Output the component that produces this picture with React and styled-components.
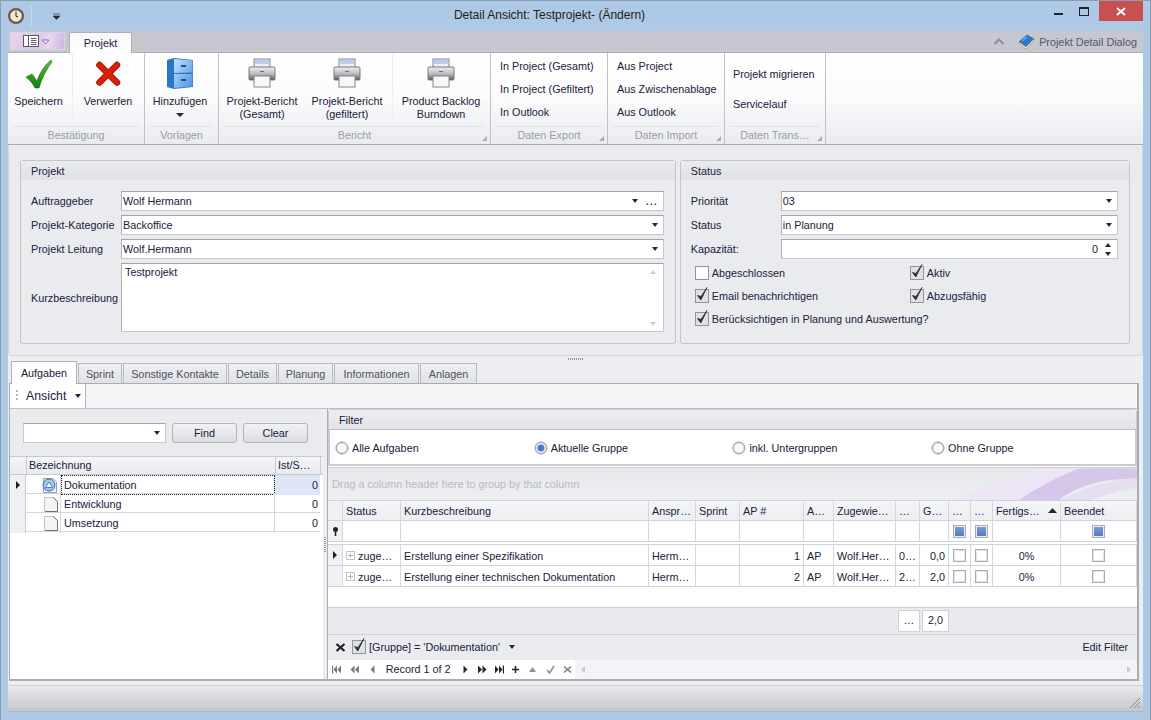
import React from 'react';
import styled, { createGlobalStyle } from 'styled-components';

const GlobalStyle = createGlobalStyle`
  html, body {
    margin: 0;
    padding: 0;
    overflow: hidden;
  }
  * {
    box-sizing: border-box;
  }
  body {
    font-family: "Liberation Sans", "Noto Sans", sans-serif;
    font-size: 10.8px;
    color: #20203c;
  }
`;

const Window = styled.div`
  width: 1151px;
  height: 720px;
  background: #aec9e6;
  border: 1px solid #8a9cb2;
  border-bottom: 0;
  display: flex;
  flex-direction: column;
`;

const TitleBar = styled.div`
  height: 30px;
  display: flex;
  align-items: flex-start;
`;

const QuickAccess = styled.div`
  width: 100px;
  height: 30px;
  display: flex;
  align-items: center;
  padding-left: 6px;
`;

const QuickDivider = styled.div`
  width: 1px;
  height: 20px;
  background: #c6daee;
  margin: 0 20px 0 6px;
`;

const Title = styled.div`
  flex: 1;
  text-align: center;
  font-size: 12px;
  line-height: 29px;
  color: #1c1c1c;
  padding-right: 45px;
`;

const WindowControls = styled.div`
  width: 100px;
  margin-right: 7px;
  display: flex;
  align-items: flex-start;
  justify-content: flex-end;
`;

const ControlButton = styled.div`
  width: 26px;
  height: 20px;
  display: flex;
  align-items: center;
  justify-content: center;
`;

const CloseButton = styled(ControlButton)`
  width: 44px;
  background: #c75050;
  margin-left: 2px;
`;

const Body = styled.div`
  flex: 1;
  margin: 0 7px;
  background: #eceef1;
  display: flex;
  flex-direction: column;
  min-height: 0;
`;

const RibbonTabs = styled.div`
  height: 21px;
  background: #c6c7cf;
  display: flex;
  align-items: flex-start;
  padding: 1px 6px 0 2px;
`;

const AppButton = styled.div`
  width: 55px;
  height: 18px;
  border: 1px solid #dcd2e6;
  background: linear-gradient(100deg, #e6d5ee 0%, #d8c3e6 45%, #e7d8ef 70%, #cdb8de 100%);
  display: flex;
  align-items: center;
  justify-content: center;
`;

const RibbonTab = styled.div`
  width: 63px;
  height: 21px;
  margin-left: 4px;
  background: linear-gradient(#f8f8fa, #ffffff);
  border: 1px solid #aeb0b8;
  border-bottom: 0;
  border-radius: 2px 2px 0 0;
  text-align: center;
  line-height: 21px;
  position: relative;
  z-index: 1;
`;

const TabsRight = styled.div`
  margin-left: auto;
  height: 20px;
  display: flex;
  align-items: center;
  color: #555866;
`;

const ChevronGap = styled.span`
  width: 13px;
`;

const DialogName = styled.span`
  margin-left: 4px;
`;

const Ribbon = styled.div`
  height: 93px;
  background: linear-gradient(#ffffff 0%, #fbfbfc 50%, #e9ebef 100%);
  border-top: 1px solid #aeb0b8;
  border-bottom: 1px solid #a7a9b2;
  display: flex;
`;

const RibbonGroup = styled.div`
  width: ${(p) => p.$width}px;
  border-right: 1px solid #c0c2ca;
  display: flex;
  flex-direction: column;
  position: relative;
`;

const GroupContent = styled.div`
  height: 73px;
  display: flex;
`;

const GroupCaption = styled.div`
  flex: 1;
  margin: 0 5px;
  border-top: 1px solid #e1e3e7;
  text-align: center;
  color: #9b9da6;
  line-height: 17px;
  white-space: nowrap;
`;

const CornerArrow = styled.div`
  position: absolute;
  right: 3px;
  bottom: 3px;
  width: 0;
  height: 0;
  border-left: 5px solid transparent;
  border-bottom: 5px solid #a9abb2;
`;

const LargeButton = styled.div`
  width: ${(p) => p.$width}px;
  display: flex;
  flex-direction: column;
  align-items: center;
  text-align: center;
  line-height: 13px;
  padding: 4px ${(p) => p.$inset || 0}px 0 0;
  border-right: ${(p) => (p.$divider ? '1px solid #eceef1' : '0')};
`;

const IconSlot = styled.div`
  height: 38px;
`;

const DownCaret = styled.div`
  width: 0;
  height: 0;
  margin-top: 5px;
  border-left: 4px solid transparent;
  border-right: 4px solid transparent;
  border-top: 4px solid #26262e;
`;

const SmallButtons = styled.div`
  display: flex;
  flex-direction: column;
  gap: ${(p) => p.$gap}px;
  padding: ${(p) => p.$top}px 0 0 ${(p) => p.$left}px;
  line-height: 13px;
  white-space: nowrap;
`;

const TopPanel = styled.div`
  height: 211px;
  background: #e9ebef;
  border: 1px solid #d3d5da;
  border-top: 0;
  border-radius: 0 0 4px 4px;
  padding: 15px 12px 0 11px;
  display: flex;
  gap: 4px;
`;

const GroupBox = styled.div`
  width: ${(p) => p.$width}px;
  height: 184px;
  border: 1px solid #c3c5cb;
  border-radius: 3px;
`;

const GroupHeader = styled.div`
  height: 19px;
  padding-left: 10px;
  line-height: 20px;
  background: linear-gradient(#e9ebee, #dfe1e5);
`;

const GroupBody = styled.div`
  display: flex;
  flex-direction: column;
  gap: 4px;
  padding: 11px 11px 0 10px;
`;

const FormRow = styled.div`
  display: flex;
  align-items: center;
`;

const FormLabel = styled.div`
  width: 90px;
  flex: none;
  white-space: nowrap;
`;

const Field = styled.div`
  flex: 1;
  height: 20px;
  background: #fff;
  border: 1px solid #c6c8ce;
  border-top-color: #a2a4ab;
  border-left-color: #b2b4ba;
  display: flex;
  align-items: center;
  padding: 0 5px 0 1px;
  line-height: 16px;
  white-space: nowrap;
`;

const FieldValue = styled.span`
  flex: 1;
  text-align: ${(p) => p.$align || 'left'};
`;

const ComboArrow = styled.span`
  width: 0;
  height: 0;
  flex: none;
  border-left: 3.5px solid transparent;
  border-right: 3.5px solid transparent;
  border-top: 4px solid #26262e;
`;

const Ellipsis = styled.span`
  flex: none;
  width: 20px;
  text-align: right;
  font-size: 13px;
  line-height: 12px;
`;

const Spinner = styled.span`
  display: flex;
  flex-direction: column;
  gap: 5px;
  margin-left: 7px;
  margin-right: 1px;
`;

const SpinUp = styled.span`
  width: 0;
  height: 0;
  border-left: 3.5px solid transparent;
  border-right: 3.5px solid transparent;
  border-bottom: 4px solid #26262e;
`;

const MemoField = styled.div`
  flex: 1;
  height: 69px;
  background: #fff;
  border: 1px solid #c6c8ce;
  border-top-color: #a2a4ab;
  border-left-color: #b2b4ba;
  padding: 2px 4px 1px 3px;
  display: flex;
  justify-content: space-between;
`;

const MemoScroll = styled.div`
  display: flex;
  flex-direction: column;
  justify-content: space-between;
  padding: 4px 0 4px;
  width: 7px;
  margin-right: 2px;
`;

const MemoArrowUp = styled.span`
  width: 0;
  height: 0;
  border-left: 3.5px solid transparent;
  border-right: 3.5px solid transparent;
  border-bottom: 4px solid #cdced3;
`;

const MemoArrowDown = styled.span`
  width: 0;
  height: 0;
  border-left: 3.5px solid transparent;
  border-right: 3.5px solid transparent;
  border-top: 4px solid #cdced3;
`;

const CheckGrid = styled.div`
  display: grid;
  grid-template-columns: 215px 1fr;
  grid-auto-rows: 23px;
  padding-left: 3px;
  margin-top: -2px;
`;

const CheckItem = styled.div`
  display: flex;
  align-items: center;
  gap: 2px;
  grid-column: ${(p) => (p.$wide ? '1 / 3' : 'auto')};
  white-space: nowrap;
`;

const CheckGlyph = styled.svg`
  flex: none;
  margin-top: -3px;
`;

const SplitterH = styled.div`
  height: 5px;
  display: flex;
  align-items: center;
  justify-content: center;
`;

const DotsH = styled.div`
  width: 15px;
  height: 2px;
  background: repeating-linear-gradient(90deg, #8e98a6 0 1px, transparent 1px 2px);
`;

const TabStrip = styled.div`
  height: 22px;
  margin-left: 1px;
  display: flex;
  align-items: flex-end;
  padding-left: 2px;
  gap: 1px;
`;

const Tab = styled.div`
  width: ${(p) => p.$width}px;
  height: ${(p) => (p.$active ? 23 : 20)}px;
  margin-bottom: ${(p) => (p.$active ? -1 : 0)}px;
  background: ${(p) => (p.$active ? '#ffffff' : 'linear-gradient(#eff0f3, #e0e2e6)')};
  border: 1px solid ${(p) => (p.$active ? '#b0b2ba' : '#b8bac1')};
  border-bottom: 0;
  text-align: center;
  line-height: ${(p) => (p.$active ? 22 : 20)}px;
  color: ${(p) => (p.$active ? '#20203c' : '#4f5160')};
  position: relative;
  z-index: ${(p) => (p.$active ? 1 : 0)};
`;

const TabPanel = styled.div`
  height: 298px;
  margin: 0 4px 0 1px;
  border: 1px solid #a9abb3;
  border-right-width: 2px;
  border-bottom-width: 2px;
  background: #fff;
  display: flex;
  flex-direction: column;
`;

const Toolbar = styled.div`
  height: 25px;
  background: #f4f5f6;
  border-bottom: 1px solid #bfc1c7;
  display: flex;
`;

const ToolbarSegment = styled.div`
  width: 76px;
  height: 24px;
  background: #fff;
  border-right: 1px solid #b4b6bc;
  display: flex;
  align-items: center;
  padding-left: 6px;
  font-size: 12.3px;
`;

const Grip = styled.div`
  width: 2px;
  height: 12px;
  margin-right: 8px;
  background: repeating-linear-gradient(#b6b8be 0 2px, transparent 2px 4px);
`;

const ToolbarLabel = styled.span`
  margin-right: 9px;
`;

const Panes = styled.div`
  flex: 1;
  display: flex;
  min-height: 0;
`;

const LeftPane = styled.div`
  width: 313px;
  display: flex;
  flex-direction: column;
`;

const SearchBar = styled.div`
  height: 47px;
  background: #e9ebef;
  padding: 14px 0 0 13px;
  display: flex;
  align-items: flex-start;
`;

const SearchCombo = styled.div`
  width: 143px;
  height: 20px;
  background: #fff;
  border: 1px solid #c6c8ce;
  border-top-color: #a2a4ab;
  display: flex;
  align-items: center;
  justify-content: flex-end;
  padding-right: 5px;
`;

const Button = styled.div`
  width: 65px;
  height: 20px;
  margin-left: 6px;
  background: linear-gradient(#f1f2f4, #dbdde2);
  border: 1px solid #b2b4bb;
  border-radius: 3px;
  text-align: center;
  line-height: 18px;
`;

const TreeHead = styled.div`
  display: grid;
  grid-template-columns: 16px 249px 45px 1fr;
  height: 19px;
  background: linear-gradient(#f4f5f7, #e9ebee);
  border-top: 1px solid #c8cad0;
  border-bottom: 1px solid #c8cad0;
`;

const TreeHeadCell = styled.div`
  border-left: 1px solid #c8cad0;
  padding-left: 2px;
  line-height: 17px;
  white-space: nowrap;
  overflow: hidden;
`;

const TreeRow = styled.div`
  display: grid;
  grid-template-columns: 16px 35px 214px 45px;
  height: 19px;
  border-bottom: 1px solid #d5d7dc;
  width: 310px;
`;

const RowIndicator = styled.div`
  background: #eff0f3;
  border-right: 1px solid #c8cad0;
  display: flex;
  align-items: center;
  justify-content: center;
`;

const TreeIndent = styled.div`
  border-right: 1px solid #d5d7dc;
  display: flex;
  align-items: center;
  justify-content: flex-end;
  padding-right: 1px;
`;

const TreeName = styled.div`
  padding-left: 3px;
  line-height: 20px;
  border-right: 1px solid #d5d7dc;
  outline: ${(p) => (p.$focused ? '1px dotted #222' : '0')};
  outline-offset: -1px;
`;

const TreeValue = styled.div`
  text-align: right;
  padding-right: 2px;
  line-height: 20px;
  background: ${(p) => (p.$selected ? '#dfe7f7' : 'transparent')};
`;

const IndicatorArrow = styled.span`
  width: 0;
  height: 0;
  border-top: 4px solid transparent;
  border-bottom: 4px solid transparent;
  border-left: 4px solid #1e1e26;
`;

const SplitterV = styled.div`
  width: 4px;
  background: #eceef1;
  display: flex;
  align-items: center;
  justify-content: center;
`;

const DotsV = styled.div`
  width: 2px;
  height: 15px;
  background: repeating-linear-gradient(#8e98a6 0 1px, transparent 1px 2px);
`;

const RightPane = styled.div`
  width: 810px;
  border-left: 1px solid #a9abb3;
  display: flex;
  flex-direction: column;
`;

const FilterBox = styled.div`
  height: 57px;
  border: 1px solid #c9cbd1;
  border-top-left-radius: 3px;
  border-top-right-radius: 3px;
  background: #e9ebef;
`;

const FilterHeader = styled.div`
  height: 20px;
  padding-left: 10px;
  line-height: 20px;
  background: linear-gradient(#eceef0, #e1e3e6);
  border-bottom: 1px solid #bcbec4;
`;

const RadioRow = styled.div`
  height: 35px;
  background: #fff;
  display: grid;
  grid-template-columns: repeat(4, 198.7px);
  padding: 1px 0 0 5px;
  align-items: center;
  border-left: 1px solid #c9cbd1;
  border-right: 1px solid #c9cbd1;
  border-bottom: 1px solid #c9cbd1;
`;

const RadioItem = styled.div`
  display: flex;
  align-items: center;
  gap: 3px;
`;

const GroupPanel = styled.div`
  height: 33px;
  margin-top: 1px;
  background: linear-gradient(#e6e7ea, #eeeff2);
  border-top: 1px solid #c9cbd1;
  display: flex;
  align-items: center;
  justify-content: space-between;
  padding-left: 4px;
  color: #b9bbc2;
`;

const DataRow = styled.div`
  display: grid;
  grid-template-columns: 15px 58px 248px 47px 44px 64px 30px 62px 24px 29px 22px 22px 68px 76px;
  height: ${(p) => p.$height}px;
  border-bottom: 1px solid #d0d2d8;
  background: ${(p) => p.$background || '#fff'};
  margin-top: ${(p) => p.$top || 0}px;
  border-top: ${(p) => (p.$ruled ? '1px solid #d0d2d8' : '0')};
`;

const Cell = styled.div`
  border-right: 1px solid #d5d7dc;
  padding: 0 3px;
  display: flex;
  align-items: center;
  justify-content: ${(p) => p.$justify || 'flex-start'};
  white-space: nowrap;
  overflow: hidden;
  gap: 3px;
`;

const TextCell = styled(Cell)`
  padding-top: 1px;
`;

const IndicatorCell = styled(Cell)`
  background: #f0f1f4;
  padding: 0;
  justify-content: center;
`;

const GridBlank = styled.div`
  flex: 1;
  background: #fff;
`;

const Expander = styled.span`
  width: 9px;
  height: 9px;
  flex: none;
  border: 1px solid #c0c2c8;
  background:
    linear-gradient(#b0b2b8, #b0b2b8) center / 5px 1px no-repeat,
    linear-gradient(#b0b2b8, #b0b2b8) center / 1px 5px no-repeat;
`;

const GridCheck = styled.span`
  width: 13px;
  height: 13px;
  flex: none;
  border: 1px solid #a9abb2;
  background: ${(p) => (p.$mixed ? 'linear-gradient(#7d9fdc, #4f74c0)' : '#fff')};
  box-shadow: inset 0 0 0 1px ${(p) => (p.$mixed ? '#e9ecf4' : '#e6e7ea')};
`;

const FooterBar = styled.div`
  height: 28px;
  background: #e8eaee;
  border-top: 1px solid #cdcfd5;
  border-bottom: 1px solid #cdcfd5;
  display: flex;
  justify-content: flex-end;
  align-items: center;
  gap: 2px;
  padding-right: 188px;
`;

const FooterCell = styled.div`
  width: ${(p) => p.$width}px;
  height: 22px;
  background: #fff;
  border: 1px solid #d0d2d8;
  text-align: center;
  line-height: 19px;
`;

const FilterBar = styled.div`
  height: 25px;
  background: #e9ebef;
  display: flex;
  align-items: center;
  padding: 0 9px 0 7px;
`;

const ClearGlyph = styled.svg`
  margin-right: 5px;
  flex: none;
`;

const FilterText = styled.span`
  margin: 0 9px 0 2px;
`;

const EditFilter = styled.span`
  margin-left: auto;
`;

const Navigator = styled.div`
  flex: 1;
  display: flex;
  background: #f4f4f6;
`;

const NavLeft = styled.div`
  width: 247px;
  background: #fff;
  display: flex;
  align-items: center;
`;

const NavButton = styled.span`
  width: ${(p) => p.$width || 18}px;
  display: flex;
  justify-content: center;
`;

const RecordLabel = styled.span`
  width: 76px;
  padding-left: 4px;
  white-space: nowrap;
`;

const NavScroll = styled.div`
  flex: 1;
  display: flex;
  align-items: center;
  justify-content: space-between;
  padding: 0 3px;
`;

const StatusGap = styled.div`
  height: 4px;
  background: #eceef1;
`;

const StatusBar = styled.div`
  height: 27px;
  background: linear-gradient(#e9eaec, #c6c7cc);
  border-top: 1px solid #cfd1d6;
  border-bottom: 1px solid #b4b5ba;
  display: flex;
  justify-content: flex-end;
  align-items: flex-end;
  padding: 0 2px 2px 0;
`;

const BottomEdge = styled.div`
  flex: 1;
  background: #aec9e6;
`;

const ClockIcon = () => (
  <svg width="18" height="18" viewBox="0 0 18 18">
    <circle cx="9" cy="9" r="8" fill="#6d5a44" />
    <circle cx="9" cy="9" r="5.8" fill="#f1e8cf" />
    <path d="M9 4.5V9.3L11 10" stroke="#1b1b1b" strokeWidth="1" fill="none" />
  </svg>
);

const CheckIcon = () => (
  <svg width="30" height="33" viewBox="0 0 30 33">
    <defs>
      <linearGradient id="chk" x1="0" y1="0" x2="0" y2="1">
        <stop offset="0" stopColor="#5cbf3c" />
        <stop offset="1" stopColor="#0f7f12" />
      </linearGradient>
    </defs>
    <path d="M2 20 L8 17 L13 24 C16 15 21 8 27 3 L28 5 C22 13 18 21 15 31 L11 31 C9 27 6 23 2 20 Z" fill="url(#chk)" stroke="#1c6b1c" strokeWidth=".6" />
  </svg>
);

const CrossIcon = () => (
  <svg width="30" height="33" viewBox="0 0 30 33">
    <path d="M6.5 8 L24 25.5 M24 8 L6.5 25.5" stroke="#8a1204" strokeWidth="6.5" strokeLinecap="round" />
    <path d="M6.5 8 L24 25.5 M24 8 L6.5 25.5" stroke="#dd1f08" strokeWidth="5" strokeLinecap="round" />
  </svg>
);

const CabinetIcon = () => (
  <svg width="30" height="33" viewBox="0 0 30 33">
    <defs>
      <linearGradient id="cab" x1="0" y1="0" x2="1" y2="1">
        <stop offset="0" stopColor="#c4e3fb" />
        <stop offset="1" stopColor="#4a93dd" />
      </linearGradient>
    </defs>
    <path d="M2 3 L9 1 L28 3 V30 L9 32 L2 30 Z" fill="#2a76c8" />
    <path d="M9 2 L27.5 3.5 V15.5 L9 16 Z M9 17 L27.5 17 V29.5 L9 31 Z" fill="url(#cab)" />
    <rect x="16" y="8" width="5" height="2" fill="#1c4f94" />
    <rect x="16" y="22" width="5" height="2" fill="#1c4f94" />
  </svg>
);

const PrinterIcon = () => (
  <svg width="30" height="33" viewBox="0 0 30 33">
    <defs>
      <linearGradient id="prn" x1="0" y1="0" x2="0" y2="1">
        <stop offset="0" stopColor="#f1f1f2" />
        <stop offset=".55" stopColor="#b6b8bb" />
        <stop offset="1" stopColor="#55585c" />
      </linearGradient>
    </defs>
    <rect x="7" y="2" width="16" height="12" fill="#eceef1" stroke="#85888c" />
    <rect x="8" y="3" width="14" height="4" fill="#b9cdf0" />
    <rect x="2" y="10" width="26" height="13" rx="1" fill="url(#prn)" stroke="#76797d" />
    <rect x="13" y="14" width="4" height="1" fill="#6a6c70" />
    <rect x="7" y="19" width="16" height="11" fill="#f7f7f8" stroke="#85888c" />
  </svg>
);

const BookIcon = () => (
  <svg width="17" height="16" viewBox="0 0 17 16">
    <path d="M1 8 L9 1 L16 5 L8 13 Z" fill="#2a7bd0" stroke="#1a5aa5" strokeWidth=".6" />
    <path d="M1 8 V10 L8 15 L16 7 V5 L8 13 Z" fill="#f2e9c8" stroke="#8a7f55" strokeWidth=".5" />
    <path d="M4 7 L9 3" stroke="#9bcaf2" strokeWidth="1" />
  </svg>
);

const PanelIcon = () => (
  <svg width="32" height="14" viewBox="0 0 32 14">
    <rect x="1.5" y="1.5" width="15" height="11" fill="#fff" stroke="#5a5a66" />
    <path d="M6.5 1.5V12.5" stroke="#5a5a66" />
    <path d="M9 4.5H14.5M9 6.5H14.5M9 8.5H14.5M9 10.5H14.5" stroke="#5a5a66" />
    <path d="M20 6 H27 L23.5 10 Z" fill="#f3ecf8" stroke="#8a6fa8" />
  </svg>
);

const ChevronUpIcon = () => (
  <svg width="12" height="10" viewBox="0 0 12 10">
    <path d="M1.5 7 L6 2.5 L10.5 7" fill="none" stroke="#8c8e96" strokeWidth="2" />
  </svg>
);

const QuickCaret = () => (
  <svg width="9" height="7" viewBox="0 0 9 7">
    <path d="M1 1H8M1 3H8L4.5 6.5Z" fill="#2a2a33" stroke="#2a2a33" strokeWidth=".6" />
  </svg>
);

const Check = ({ checked }) => (
  <CheckGlyph width="16" height="17" viewBox="0 0 16 17">
    <rect x="1.5" y="3.5" width="13" height="13" fill={checked ? '#dfe1e5' : '#f4f5f7'} stroke="#93959c" />
    {!checked && <rect x="2.5" y="4.5" width="11" height="11" fill="#ffffff" />}
    {checked && <path d="M3.5 9.5 L6.8 14 L13 1.5 L7 10.5 Z" fill="#2c2c34" stroke="#2c2c34" strokeWidth=".8" strokeLinejoin="round" />}
  </CheckGlyph>
);

const Radio = ({ on }) => (
  <svg width="14" height="14" viewBox="0 0 14 14">
    <circle cx="7" cy="7" r="6" fill="#d6d7db" stroke="#9b9da4" />
    <circle cx="7" cy="7" r="4" fill={on ? '#4f78c8' : '#f9f9fa'} stroke="#ffffff" strokeWidth=".8" />
  </svg>
);

const DocIcon = () => (
  <svg width="16" height="17" viewBox="0 0 16 17">
    <path d="M1.5 1.5 H10 L14.5 5.5 V15.5 H1.5 Z" fill="#f4f4f5" stroke="#c0c1c5" />
    <path d="M2 15.5 H14.5 V5.5 L10.5 1.5" fill="none" stroke="#6f7075" />
  </svg>
);

const FolderDocIcon = () => (
  <svg width="18" height="17" viewBox="0 0 18 17">
    <path d="M2.5 1.5 H12 L15.5 5 V15.5 H2.5 Z" fill="#f4f4f5" stroke="#9a9ba0" />
    <circle cx="8" cy="8" r="6" fill="#9cc6ee" stroke="#2f6fb4" />
    <path d="M4.5 10.5 L8 5 L11.5 10.5 Z" fill="#fff" stroke="#2f6fb4" strokeWidth=".8" />
  </svg>
);

const KeyIcon = () => (
  <svg width="7" height="9" viewBox="0 0 7 9">
    <circle cx="3.5" cy="2.5" r="2.5" fill="#24242c" />
    <rect x="2.7" y="4" width="1.6" height="5" fill="#24242c" />
  </svg>
);

const SortUp = () => (
  <svg width="9" height="5" viewBox="0 0 9 5">
    <path d="M4.5 0 L9 5 H0 Z" fill="#26262e" />
  </svg>
);

const NavIcon = ({ d, color = '#777a82', stroke }) => (
  <svg width="11" height="9" viewBox="0 0 11 9">
    <path d={d} fill={stroke ? 'none' : color} stroke={stroke ? color : 'none'} strokeWidth={stroke ? 1.6 : 0} />
  </svg>
);

const ClearIcon = () => (
  <ClearGlyph width="11" height="9" viewBox="0 0 11 9">
    <path d="M1.5 1 L9.5 8 M9.5 1 L1.5 8" stroke="#1f1f27" strokeWidth="2.2" />
  </ClearGlyph>
);

const GripIcon = () => (
  <svg width="12" height="12" viewBox="0 0 12 12">
    <path d="M1 11 L11 1 M5 11 L11 5 M9 11 L11 9" stroke="#85878d" strokeWidth="1" />
  </svg>
);

const Swoosh = () => (
  <svg width="184" height="33" viewBox="0 0 184 33">
    <path d="M0 33 C30 20 60 8 97 0 H130 C105 8 85 20 64 33 Z" fill="#ece5f3" />
    <path d="M64 33 C85 20 105 8 125 1 C140 0 165 0 184 1 V12 C150 8 120 20 105 33 Z" fill="#d6c7ea" />
    <path d="M105 33 C125 22 155 12 184 10 V20 C165 22 150 28 135 33 Z" fill="#e6dff0" />
  </svg>
);

const largeIconFor = { check: CheckIcon, cross: CrossIcon, cabinet: CabinetIcon, printer: PrinterIcon };

const RibbonButton = ({ icon, width, lines, caret, divider, inset }) => {
  const Icon = largeIconFor[icon];
  return (
    <LargeButton $width={width} $divider={divider} $inset={inset}>
      <IconSlot><Icon /></IconSlot>
      {lines.map((l) => <div key={l}>{l}</div>)}
      {caret && <DownCaret />}
    </LargeButton>
  );
};

const tabs = [
  ['Aufgaben', 66, true],
  ['Sprint', 44],
  ['Sonstige Kontakte', 104],
  ['Details', 49],
  ['Planung', 55],
  ['Informationen', 85],
  ['Anlagen', 57],
];

const treeRows = [
  { name: 'Dokumentation', active: true },
  { name: 'Entwicklung' },
  { name: 'Umsetzung' },
];

const gridHead = ['Status', 'Kurzbeschreibung', 'Anspr…', 'Sprint', 'AP #', 'A…', 'Zugewie…', '…', 'G…', '…', '…'];

const gridRows = [
  { text: 'Erstellung einer Spezifikation', ap: '1', hours: '0…', total: '0,0', current: true },
  { text: 'Erstellung einer technischen Dokumentation', ap: '2', hours: '2…', total: '2,0' },
];

const navIcons = {
  first: 'M1 0.5V8.5H2.2V0.5Z M6 0.5V8.5L2.5 4.5Z M10 0.5V8.5L6.5 4.5Z',
  prevPage: 'M5.5 0.5V8.5L1.5 4.5Z M10 0.5V8.5L6 4.5Z',
  prev: 'M7.5 0.5V8.5L3.5 4.5Z',
  next: 'M3.5 0.5V8.5L7.5 4.5Z',
  nextPage: 'M1 0.5V8.5L5 4.5Z M5.5 0.5V8.5L9.5 4.5Z',
  last: 'M1 0.5V8.5L4.5 4.5Z M5 0.5V8.5L8.5 4.5Z M8.8 0.5V8.5H10V0.5Z',
};

export default function App() {
  return (
    <>
      <GlobalStyle />
      <Window>
        <TitleBar>
          <QuickAccess>
            <ClockIcon />
            <QuickDivider />
            <QuickCaret />
          </QuickAccess>
          <Title>Detail Ansicht: Testprojekt- (Ändern)</Title>
          <WindowControls>
            <ControlButton>
              <svg width="9" height="9" viewBox="0 0 9 9"><rect x="0" y="6" width="9" height="2" fill="#222" /></svg>
            </ControlButton>
            <ControlButton>
              <svg width="10" height="10" viewBox="0 0 10 10"><rect x=".5" y="1.5" width="9" height="8" fill="none" stroke="#222" /><rect x="0" y="1" width="10" height="2" fill="#222" /></svg>
            </ControlButton>
            <CloseButton>
              <svg width="10" height="9" viewBox="0 0 10 9"><path d="M1 1L9 8M9 1L1 8" stroke="#fff" strokeWidth="2" /></svg>
            </CloseButton>
          </WindowControls>
        </TitleBar>
        <Body>
          <RibbonTabs>
            <AppButton><PanelIcon /></AppButton>
            <RibbonTab>Projekt</RibbonTab>
            <TabsRight>
              <ChevronUpIcon />
              <ChevronGap />
              <BookIcon />
              <DialogName>Projekt Detail Dialog</DialogName>
            </TabsRight>
          </RibbonTabs>
          <Ribbon>
            <RibbonGroup $width={137}>
              <GroupContent>
                <RibbonButton icon="check" width={65} inset={3} lines={['Speichern']} divider />
                <RibbonButton icon="cross" width={70} lines={['Verwerfen']} />
              </GroupContent>
              <GroupCaption>Bestätigung</GroupCaption>
            </RibbonGroup>
            <RibbonGroup $width={74}>
              <GroupContent>
                <RibbonButton icon="cabinet" width={70} lines={['Hinzufügen']} caret />
              </GroupContent>
              <GroupCaption>Vorlagen</GroupCaption>
            </RibbonGroup>
            <RibbonGroup $width={272}>
              <GroupContent>
                <RibbonButton icon="printer" width={86} lines={['Projekt-Bericht', '(Gesamt)']} />
                <RibbonButton icon="printer" width={88} inset={3} lines={['Projekt-Bericht', '(gefiltert)']} divider />
                <RibbonButton icon="printer" width={96} lines={['Product Backlog', 'Burndown']} />
              </GroupContent>
              <GroupCaption>Bericht</GroupCaption>
              <CornerArrow />
            </RibbonGroup>
            <RibbonGroup $width={117}>
              <GroupContent>
                <SmallButtons $top={7} $gap={10} $left={9}>
                  <div>In Project (Gesamt)</div>
                  <div>In Project (Gefiltert)</div>
                  <div>In Outlook</div>
                </SmallButtons>
              </GroupContent>
              <GroupCaption>Daten Export</GroupCaption>
              <CornerArrow />
            </RibbonGroup>
            <RibbonGroup $width={117}>
              <GroupContent>
                <SmallButtons $top={7} $gap={10} $left={9}>
                  <div>Aus Project</div>
                  <div>Aus Zwischenablage</div>
                  <div>Aus Outlook</div>
                </SmallButtons>
              </GroupContent>
              <GroupCaption>Daten Import</GroupCaption>
              <CornerArrow />
            </RibbonGroup>
            <RibbonGroup $width={101}>
              <GroupContent>
                <SmallButtons $top={15} $gap={17} $left={8}>
                  <div>Projekt migrieren</div>
                  <div>Servicelauf</div>
                </SmallButtons>
              </GroupContent>
              <GroupCaption>Daten Trans…</GroupCaption>
              <CornerArrow />
            </RibbonGroup>
          </Ribbon>
          <TopPanel>
            <GroupBox $width={657}>
              <GroupHeader>Projekt</GroupHeader>
              <GroupBody>
                <FormRow>
                  <FormLabel>Auftraggeber</FormLabel>
                  <Field>
                    <FieldValue>Wolf Hermann</FieldValue>
                    <ComboArrow />
                    <Ellipsis>…</Ellipsis>
                  </Field>
                </FormRow>
                <FormRow>
                  <FormLabel>Projekt-Kategorie</FormLabel>
                  <Field>
                    <FieldValue>Backoffice</FieldValue>
                    <ComboArrow />
                  </Field>
                </FormRow>
                <FormRow>
                  <FormLabel>Projekt Leitung</FormLabel>
                  <Field>
                    <FieldValue>Wolf.Hermann</FieldValue>
                    <ComboArrow />
                  </Field>
                </FormRow>
                <FormRow>
                  <FormLabel>Kurzbeschreibung</FormLabel>
                  <MemoField>
                    <div>Testprojekt</div>
                    <MemoScroll>
                      <MemoArrowUp />
                      <MemoArrowDown />
                    </MemoScroll>
                  </MemoField>
                </FormRow>
              </GroupBody>
            </GroupBox>
            <GroupBox $width={451}>
              <GroupHeader>Status</GroupHeader>
              <GroupBody>
                <FormRow>
                  <FormLabel>Priorität</FormLabel>
                  <Field>
                    <FieldValue>03</FieldValue>
                    <ComboArrow />
                  </Field>
                </FormRow>
                <FormRow>
                  <FormLabel>Status</FormLabel>
                  <Field>
                    <FieldValue>in Planung</FieldValue>
                    <ComboArrow />
                  </Field>
                </FormRow>
                <FormRow>
                  <FormLabel>Kapazität:</FormLabel>
                  <Field>
                    <FieldValue $align="right">0</FieldValue>
                    <Spinner>
                      <SpinUp />
                      <ComboArrow />
                    </Spinner>
                  </Field>
                </FormRow>
                <CheckGrid>
                  <CheckItem><Check />Abgeschlossen</CheckItem>
                  <CheckItem><Check checked />Aktiv</CheckItem>
                  <CheckItem><Check checked />Email benachrichtigen</CheckItem>
                  <CheckItem><Check checked />Abzugsfähig</CheckItem>
                  <CheckItem $wide><Check checked />Berücksichtigen in Planung und Auswertung?</CheckItem>
                </CheckGrid>
              </GroupBody>
            </GroupBox>
          </TopPanel>
          <SplitterH><DotsH /></SplitterH>
          <TabStrip>
            {tabs.map(([label, width, active]) => (
              <Tab key={label} $width={width} $active={active}>{label}</Tab>
            ))}
          </TabStrip>
          <TabPanel>
            <Toolbar>
              <ToolbarSegment>
                <Grip />
                <ToolbarLabel>Ansicht</ToolbarLabel>
                <ComboArrow />
              </ToolbarSegment>
            </Toolbar>
            <Panes>
              <LeftPane>
                <SearchBar>
                  <SearchCombo><ComboArrow /></SearchCombo>
                  <Button>Find</Button>
                  <Button>Clear</Button>
                </SearchBar>
                <TreeHead>
                  <div />
                  <TreeHeadCell>Bezeichnung</TreeHeadCell>
                  <TreeHeadCell>Ist/S…</TreeHeadCell>
                  <TreeHeadCell />
                </TreeHead>
                {treeRows.map((r) => (
                  <TreeRow key={r.name}>
                    <RowIndicator>{r.active && <IndicatorArrow />}</RowIndicator>
                    <TreeIndent>{r.active ? <FolderDocIcon /> : <DocIcon />}</TreeIndent>
                    <TreeName $focused={r.active}>{r.name}</TreeName>
                    <TreeValue $selected={r.active}>0</TreeValue>
                  </TreeRow>
                ))}
              </LeftPane>
              <SplitterV><DotsV /></SplitterV>
              <RightPane>
                <FilterBox>
                  <FilterHeader>Filter</FilterHeader>
                  <RadioRow>
                    <RadioItem><Radio />Alle Aufgaben</RadioItem>
                    <RadioItem><Radio on />Aktuelle Gruppe</RadioItem>
                    <RadioItem><Radio />inkl. Untergruppen</RadioItem>
                    <RadioItem><Radio />Ohne Gruppe</RadioItem>
                  </RadioRow>
                </FilterBox>
                <GroupPanel>
                  Drag a column header here to group by that column
                  <Swoosh />
                </GroupPanel>
                <DataRow $height={21} $background="linear-gradient(#f4f5f7, #eceef1)" $ruled>
                  <IndicatorCell />
                  {gridHead.map((h, i) => <Cell key={i}>{h}</Cell>)}
                  <Cell $justify="space-between">Fertigs…<SortUp /></Cell>
                  <Cell>Beendet</Cell>
                </DataRow>
                <DataRow $height={21}>
                  <IndicatorCell><KeyIcon /></IndicatorCell>
                  {Array.from({ length: 9 }).map((_, i) => <Cell key={i} />)}
                  <Cell $justify="center"><GridCheck $mixed /></Cell>
                  <Cell $justify="center"><GridCheck $mixed /></Cell>
                  <Cell />
                  <Cell $justify="center"><GridCheck $mixed /></Cell>
                </DataRow>
                {gridRows.map((r, i) => (
                  <DataRow key={r.ap} $height={i === 0 ? 22 : 21} $top={i === 0 ? 2 : 0} $ruled={i === 0}>
                    <IndicatorCell>{r.current && <IndicatorArrow />}</IndicatorCell>
                    <TextCell><Expander />zuge…</TextCell>
                    <TextCell>{r.text}</TextCell>
                    <TextCell>Herm…</TextCell>
                    <Cell />
                    <TextCell $justify="flex-end">{r.ap}</TextCell>
                    <TextCell>AP</TextCell>
                    <TextCell>Wolf.Her…</TextCell>
                    <TextCell>{r.hours}</TextCell>
                    <TextCell $justify="flex-end">{r.total}</TextCell>
                    <Cell $justify="center"><GridCheck /></Cell>
                    <Cell $justify="center"><GridCheck /></Cell>
                    <TextCell $justify="center">0%</TextCell>
                    <Cell $justify="center"><GridCheck /></Cell>
                  </DataRow>
                ))}
                <GridBlank />
                <FooterBar>
                  <FooterCell $width={22}>…</FooterCell>
                  <FooterCell $width={27}>2,0</FooterCell>
                </FooterBar>
                <FilterBar>
                  <ClearIcon />
                  <Check checked />
                  <FilterText>[Gruppe] = 'Dokumentation'</FilterText>
                  <ComboArrow />
                  <EditFilter>Edit Filter</EditFilter>
                </FilterBar>
                <Navigator>
                  <NavLeft>
                    <NavButton><NavIcon d={navIcons.first} /></NavButton>
                    <NavButton><NavIcon d={navIcons.prevPage} /></NavButton>
                    <NavButton><NavIcon d={navIcons.prev} /></NavButton>
                    <RecordLabel>Record 1 of 2</RecordLabel>
                    <NavButton $width={16}><NavIcon d={navIcons.next} color="#26262e" /></NavButton>
                    <NavButton $width={18}><NavIcon d={navIcons.nextPage} color="#26262e" /></NavButton>
                    <NavButton $width={16}><NavIcon d={navIcons.last} color="#26262e" /></NavButton>
                    <NavButton $width={16}><NavIcon d="M5.5 1V8M2 4.5H9" color="#26262e" stroke /></NavButton>
                    <NavButton $width={18}><NavIcon d="M5.5 2L9 7H2Z" color="#8f9198" /></NavButton>
                    <NavButton $width={18}><NavIcon d="M2 5L4.5 8L9 1" color="#8f9198" stroke /></NavButton>
                    <NavButton $width={16}><NavIcon d="M2 1.5L9 7.5M9 1.5L2 7.5" color="#7b7d85" stroke /></NavButton>
                  </NavLeft>
                  <NavScroll>
                    <NavIcon d="M7 1V8L3 4.5Z" color="#c9cad0" />
                    <NavIcon d="M4 1V8L8 4.5Z" color="#c9cad0" />
                  </NavScroll>
                </Navigator>
              </RightPane>
            </Panes>
          </TabPanel>
          <StatusGap />
          <StatusBar><GripIcon /></StatusBar>
          <BottomEdge />
        </Body>
      </Window>
    </>
  );
}
